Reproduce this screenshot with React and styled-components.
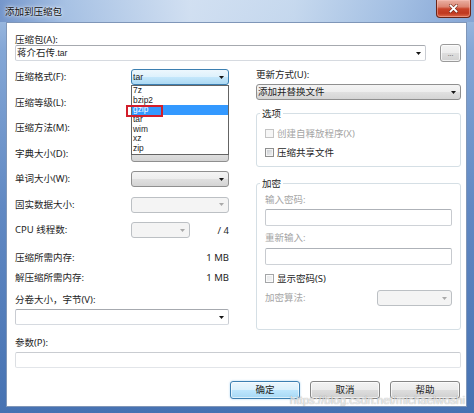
import React from 'react';
import styled, { createGlobalStyle, css } from 'styled-components';

const FONT = `"Noto Sans", "Noto Sans CJK SC", sans-serif`;
const LIST_FONT = `"Liberation Sans", "Noto Sans CJK SC", sans-serif`;

const Global = createGlobalStyle`
  html, body { margin: 0; padding: 0; width: 474px; height: 413px; overflow: hidden; background: #5a83bf; }
  #root { width: 474px; height: 413px; }
  *, *::before, *::after { box-sizing: border-box; }
`;

const Window = styled.div`
  width: 474px;
  height: 413px;
  display: flex;
  flex-direction: column;
  background: linear-gradient(180deg, #a6c1e4 0%, #84a7d6 12%, #6189c3 50%, #4672b2 100%);
  font-family: ${FONT};
  font-size: 9.5px;
  color: #1e1e1e;
`;

const TitleBar = styled.div`
  height: 22px;
  flex: none;
  display: flex;
  align-items: flex-start;
  justify-content: space-between;
  padding: 0 3px 0 5px;
  background: linear-gradient(90deg,
    rgba(112, 146, 200, 0.9) 0%,
    rgba(168, 194, 228, 0.85) 14%,
    rgba(214, 227, 243, 0.9) 40%,
    rgba(204, 221, 240, 0.85) 62%,
    rgba(160, 189, 226, 0.8) 85%,
    rgba(130, 162, 210, 0.85) 100%);
`;

const Title = styled.div`
  line-height: 22px;
  font-family: "Noto Sans CJK SC", sans-serif;
  font-size: 9.5px;
  color: #101010;
  text-shadow: 0 0 5px rgba(255, 255, 255, 0.95), 0 0 2px rgba(255, 255, 255, 0.9);
`;

const CloseButton = styled.div`
  width: 35px;
  height: 18px;
  display: flex;
  align-items: center;
  justify-content: center;
  border: 1px solid #6a2416;
  border-top: none;
  border-radius: 0 0 4px 4px;
  background: linear-gradient(180deg, #eab0a3 0%, #dc8572 40%, #c8432a 52%, #c0391f 78%, #dc6a4a 100%);
  box-shadow: inset 0 0 0 1px rgba(255, 200, 190, 0.45);
`;

const Client = styled.div`
  position: relative;
  flex: 1;
  margin: 0 7px 6px 6px;
  background: #fff;
  border: 1px solid #7f96b8;
  padding: 12px 5px 7px 8px;
  display: flex;
  flex-direction: column;
`;

const Label = styled.div`
  height: 10px;
  line-height: 10px;
  white-space: nowrap;
  color: ${(p) => (p.$disabled ? '#a5a5a5' : '#1e1e1e')};
  margin-top: ${(p) => p.$mt || 0}px;
`;

const ArchiveRow = styled.div`
  height: 16px;
  display: flex;
  align-items: center;
  gap: 14px;
`;

const comboVariants = {
  edit: css`
    background: #fff;
    border: 1px solid #abadb3;
    border-color: #a6a9af #c9ccd2 #d6dae0 #c9ccd2;
    border-radius: 2px;
  `,
  list: css`
    background: linear-gradient(180deg, #f4f4f4 0%, #ededed 50%, #e0e0e0 51%, #d4d4d4 100%);
    border: 1px solid #8f8f8f;
    border-radius: 3px;
  `,
  focus: css`
    background: linear-gradient(180deg, #edf7fd 0%, #ddf1fc 50%, #c4e7fb 51%, #add9f3 100%);
    border: 1px solid #3c7fb1;
    border-radius: 3px;
  `,
  disabled: css`
    background: #f4f4f4;
    border: 1px solid #bcc0c4;
    border-radius: 3px;
  `,
};

const Combo = styled.div`
  height: ${(p) => p.$h || 16}px;
  width: ${(p) => (p.$w ? `${p.$w}px` : 'auto')};
  flex: ${(p) => (p.$grow ? '1 1 auto' : 'none')};
  min-width: 0;
  display: flex;
  align-items: center;
  padding: 0 4px 0 1px;
  line-height: 14px;
  white-space: nowrap;
  ${(p) => comboVariants[p.$variant || 'list']}
`;

const ComboText = styled.span`
  flex: 1;
  overflow: hidden;
`;

const LatinText = styled.span`
  font-family: ${LIST_FONT};
  font-size: 8.6px;
`;

const ArrowSvg = styled.svg`
  flex: none;
  width: 5px;
  height: 3px;
  fill: ${(p) => (p.$disabled ? '#a9a9a9' : '#151515')};
`;

const Arrow = ({ disabled }) => (
  <ArrowSvg viewBox="0 0 5 3" $disabled={disabled}>
    <path d="M0 0H5L2.5 3Z" />
  </ArrowSvg>
);

const BrowseButton = styled.div`
  width: 21px;
  height: 18px;
  flex: none;
  display: flex;
  align-items: flex-end;
  justify-content: center;
  padding-bottom: 4px;
  border: 1px solid #9a9a9a;
  border-radius: 3px;
  background: linear-gradient(180deg, #f3f3f3 0%, #ececec 50%, #dedede 51%, #d2d2d2 100%);
  box-shadow: inset 0 0 0 1px rgba(255, 255, 255, 0.7);
  font-size: 7px;
  line-height: 6px;
  color: #7a7a7a;
`;

const Columns = styled.div`
  display: flex;
  align-items: flex-start;
  gap: 27px;
  margin-top: 8px;
`;

const LeftColumn = styled.div`
  width: 214px;
  flex: none;
  display: flex;
  flex-direction: column;
`;

const RightColumn = styled.div`
  width: 205px;
  flex: none;
  display: flex;
  flex-direction: column;
`;

const SettingsGrid = styled.div`
  display: grid;
  grid-template-columns: 116px 98px;
  grid-auto-rows: 16px;
  row-gap: 9.5px;
  align-items: center;
`;

const ComboAnchor = styled.div`
  position: relative;
  height: 16px;
`;

const DropList = styled.div`
  position: absolute;
  top: 100%;
  left: 0;
  width: 100%;
  z-index: 5;
  background: #fff;
  border: 1px solid #646464;
`;

const DropItem = styled.div`
  height: 9.7px;
  line-height: 9.7px;
  padding-left: 1px;
  font-family: ${LIST_FONT};
  font-size: 8.4px;
  white-space: nowrap;
  background: ${(p) => (p.$selected ? '#3399ff' : 'transparent')};
  color: ${(p) => (p.$selected ? '#fff' : '#1e1e1e')};
`;

const Annotation = styled.div`
  position: absolute;
  left: -6px;
  top: 19px;
  width: 37px;
  height: 12px;
  border: 2px solid #d21e2b;
  pointer-events: none;
`;

const SplitCell = styled.div`
  display: flex;
  align-items: center;
  justify-content: space-between;
  height: 16px;
`;

const MemList = styled.div`
  margin-top: 15px;
  display: flex;
  flex-direction: column;
  gap: 9.5px;
`;

const MemRow = styled.div`
  height: 10px;
  line-height: 10px;
  display: flex;
  justify-content: space-between;
  white-space: nowrap;
`;

const VolumeCombo = styled(Combo)`
  margin-top: 4px;
`;

const SpacedCombo = styled(Combo)`
  margin-top: 4px;
`;

const Group = styled.fieldset`
  margin: ${(p) => p.$mt || 0}px 0 0 0;
  padding: ${(p) => p.$pad};
  border: 1px solid #d5dfe5;
  border-radius: 3px;
  min-inline-size: 0;
  display: flex;
  flex-direction: column;
`;

const Legend = styled.legend`
  padding: 0 2px;
  margin-left: -5px;
  height: 10px;
  line-height: 10px;
  font-size: 9.5px;
  color: #1e1e1e;
`;

const CheckRow = styled.div`
  display: flex;
  align-items: center;
  gap: 3px;
  height: 11px;
  line-height: 11px;
  white-space: nowrap;
  margin-top: ${(p) => p.$mt || 0}px;
  color: ${(p) => (p.$disabled ? '#a5a5a5' : '#1e1e1e')};
`;

const checkLooks = {
  normal: css`
    border: 1px solid #8e8f8f;
    background: linear-gradient(135deg, #c3c7cc 0%, #dfe1e3 55%, #f1f2f3 100%);
    box-shadow: inset 0 0 0 1px #f4f4f4;
  `,
  light: css`
    border: 1px solid #a4a6a8;
    background: linear-gradient(135deg, #e6e8ea 0%, #f6f6f6 100%);
    box-shadow: inset 0 0 0 1px #fbfbfb;
  `,
  disabled: css`
    border: 1px solid #c4c4c4;
    background: #f6f6f6;
  `,
};

const CheckBox = styled.span`
  width: 9px;
  height: 9px;
  flex: none;
  ${(p) => checkLooks[p.$look || 'normal']}
`;

const TextField = styled.input`
  display: block;
  width: 100%;
  height: ${(p) => p.$h || 16}px;
  margin: ${(p) => p.$mt || 0}px 0 0 0;
  padding: 0 2px;
  border: 1px solid #b5b9bf;
  border-color: ${(p) => (p.$soft ? '#c9ccd1 #dcdfe3 #e2e5e9 #dcdfe3' : '#aeb2b8 #c7cacf #ced2d7 #c7cacf')};
  border-radius: 2px;
  background: #fff;
  font: inherit;
  outline: none;
  appearance: none;
`;

const AlgoRow = styled.div`
  margin-top: 6.5px;
  height: 16px;
  display: flex;
  align-items: center;
  justify-content: space-between;
`;

const ButtonRow = styled.div`
  margin-top: 13px;
  display: flex;
  justify-content: flex-end;
  gap: 10px;
  padding-right: 1px;
`;

const PushButton = styled.button`
  width: 70px;
  height: 18px;
  padding: 0;
  font-family: ${FONT};
  font-size: 9.5px;
  line-height: 16px;
  color: #1e1e1e;
  border-radius: 3px;
  border: 1px solid ${(p) => (p.$default ? '#3c7fb1' : '#868686')};
  background: ${(p) =>
    p.$default
      ? 'linear-gradient(180deg, #eaf6fd 0%, #d9f0fc 50%, #bee6fd 51%, #a7d9f5 100%)'
      : 'linear-gradient(180deg, #f3f3f3 0%, #ebebeb 50%, #dddddd 51%, #d0d0d0 100%)'};
  box-shadow: ${(p) =>
    p.$default
      ? 'inset 0 0 0 1px rgba(255,255,255,0.6), 0 0 2px rgba(90,170,230,0.6)'
      : 'inset 0 0 0 1px rgba(255,255,255,0.7)'};
`;

const Watermark = styled.div`
  position: absolute;
  right: 1px;
  bottom: 0;
  font-family: "Liberation Sans", Arial, sans-serif;
  font-size: 11.5px;
  line-height: 11px;
  color: rgba(255, 255, 255, 0.75);
  text-shadow: 0 0 1px rgba(90, 90, 90, 0.45), 0 0 1px rgba(90, 90, 90, 0.3);
  white-space: nowrap;
  pointer-events: none;
`;

const FORMATS = ['7z', 'bzip2', 'gzip', 'tar', 'wim', 'xz', 'zip'];

export default function App() {
  return (
    <>
      <Global />
      <Window>
        <TitleBar>
          <Title>添加到压缩包</Title>
          <CloseButton>
            <svg width="9" height="9" viewBox="0 0 9 9">
              <path d="M1.5 1.5L7.5 7.5M7.5 1.5L1.5 7.5" stroke="#6b2517" strokeWidth="3" strokeLinecap="square" />
              <path d="M1.5 1.5L7.5 7.5M7.5 1.5L1.5 7.5" stroke="#ffffff" strokeWidth="1.8" strokeLinecap="square" />
            </svg>
          </CloseButton>
        </TitleBar>
        <Client>
          <Label>压缩包(A):</Label>
          <ArchiveRow>
            <Combo $variant="edit" $grow>
              <ComboText>蒋介石传<LatinText>.tar</LatinText></ComboText>
              <Arrow />
            </Combo>
            <BrowseButton>...</BrowseButton>
          </ArchiveRow>

          <Columns>
            <LeftColumn>
              <SettingsGrid>
                <Label>压缩格式(F):</Label>
                <ComboAnchor>
                  <Combo $variant="focus">
                    <ComboText><LatinText>tar</LatinText></ComboText>
                    <Arrow />
                  </Combo>
                  <DropList>
                    {FORMATS.map((f) => (
                      <DropItem key={f} $selected={f === 'gzip'}>{f}</DropItem>
                    ))}
                    <Annotation />
                  </DropList>
                </ComboAnchor>

                <Label>压缩等级(L):</Label>
                <Combo $variant="list"><ComboText /><Arrow /></Combo>

                <Label>压缩方法(M):</Label>
                <Combo $variant="list"><ComboText /><Arrow /></Combo>

                <Label>字典大小(D):</Label>
                <Combo $variant="list"><ComboText /><Arrow /></Combo>

                <Label>单词大小(W):</Label>
                <Combo $variant="list"><ComboText /><Arrow /></Combo>

                <Label>固实数据大小:</Label>
                <Combo $variant="disabled"><ComboText /><Arrow disabled /></Combo>

                <Label>CPU 线程数:</Label>
                <SplitCell>
                  <Combo $variant="disabled" $w={59}><ComboText /><Arrow disabled /></Combo>
                  <span>/ 4</span>
                </SplitCell>
              </SettingsGrid>

              <MemList>
                <MemRow><span>压缩所需内存:</span><span>1 MB</span></MemRow>
                <MemRow><span>解压缩所需内存:</span><span>1 MB</span></MemRow>
              </MemList>

              <Label $mt={12.5}>分卷大小，字节(V):</Label>
              <VolumeCombo $variant="edit">
                <ComboText />
                <Arrow />
              </VolumeCombo>
            </LeftColumn>

            <RightColumn>
              <Label $mt={1}>更新方式(U):</Label>
              <SpacedCombo $variant="list">
                <ComboText>添加并替换文件</ComboText>
                <Arrow />
              </SpacedCombo>

              <Group $mt={8.5} $pad="9px 8px 8.5px 8px">
                <Legend>选项</Legend>
                <CheckRow $disabled>
                  <CheckBox $look="disabled" />
                  <span>创建自释放程序(X)</span>
                </CheckRow>
                <CheckRow $mt={8}>
                  <CheckBox $look="normal" />
                  <span>压缩共享文件</span>
                </CheckRow>
              </Group>

              <Group $mt={11.5} $pad="6.5px 8px 23px 8px">
                <Legend>加密</Legend>
                <Label $disabled>输入密码:</Label>
                <TextField $h={17} $mt={4} readOnly value="" />
                <Label $disabled $mt={7}>重新输入:</Label>
                <TextField $h={17} $mt={4.5} readOnly value="" />
                <CheckRow $mt={8}>
                  <CheckBox $look="light" />
                  <span>显示密码(S)</span>
                </CheckRow>
                <AlgoRow>
                  <Label $disabled>加密算法:</Label>
                  <Combo $variant="disabled" $w={75}><ComboText /><Arrow disabled /></Combo>
                </AlgoRow>
              </Group>
            </RightColumn>
          </Columns>

          <Label $mt={8}>参数(P):</Label>
          <TextField $h={16} $mt={4} $soft readOnly value="" />

          <ButtonRow>
            <PushButton $default>确定</PushButton>
            <PushButton>取消</PushButton>
            <PushButton>帮助</PushButton>
          </ButtonRow>

          <Watermark>https://blog.csdn.net/michaelwoshi</Watermark>
        </Client>
      </Window>
    </>
  );
}
